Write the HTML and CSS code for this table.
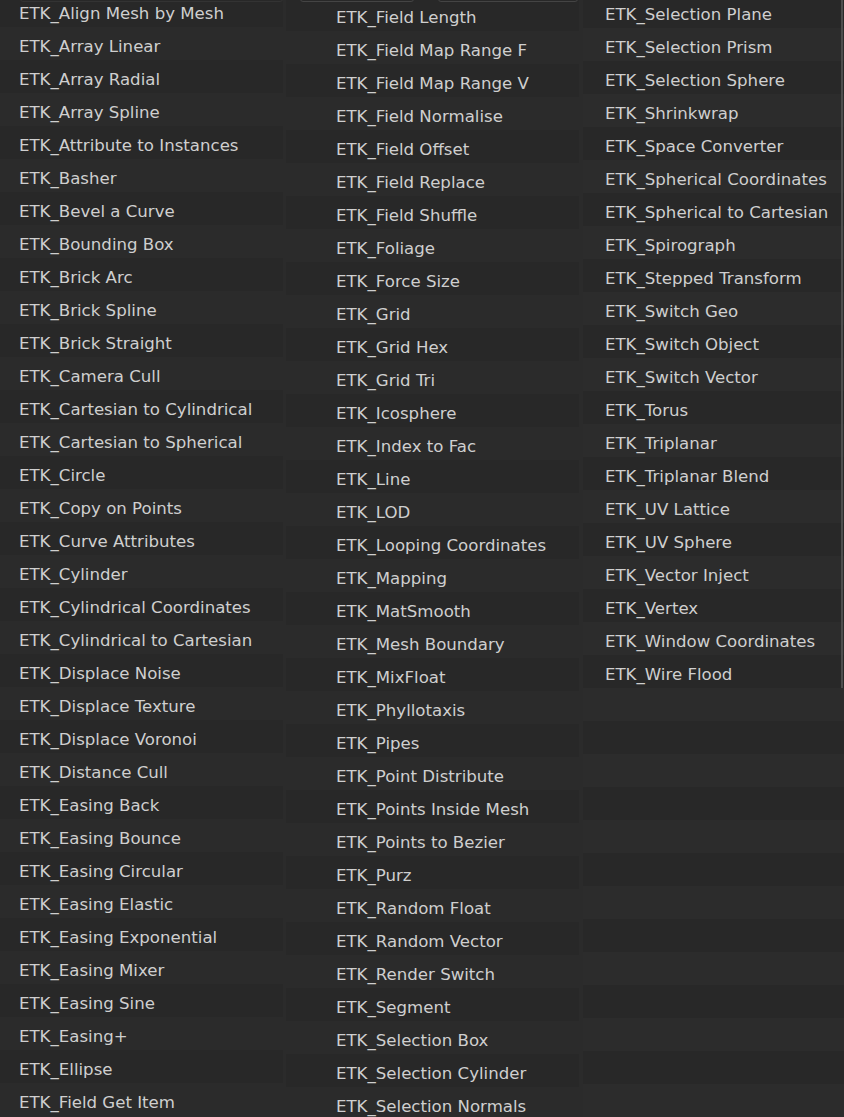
FILE: index.html
```html
<!DOCTYPE html>
<html>
<head>
    <meta charset="UTF-8">
    <title>ETK nodes</title>
    <link rel="stylesheet" href="styles.css">
</head>
<body>
<div id="menu">
    <!--top edge of the search field-->
    <div class="edge edgeA"></div>
    <div class="edge edgeB"></div>
    <div class="edge edgeC"></div>
    <!--first column-->
    <ul class="col colA">
        <li>ETK_Align Mesh by Mesh</li>
        <li>ETK_Array Linear</li>
        <li>ETK_Array Radial</li>
        <li>ETK_Array Spline</li>
        <li>ETK_Attribute to Instances</li>
        <li>ETK_Basher</li>
        <li>ETK_Bevel a Curve</li>
        <li>ETK_Bounding Box</li>
        <li>ETK_Brick Arc</li>
        <li>ETK_Brick Spline</li>
        <li>ETK_Brick Straight</li>
        <li>ETK_Camera Cull</li>
        <li>ETK_Cartesian to Cylindrical</li>
        <li>ETK_Cartesian to Spherical</li>
        <li>ETK_Circle</li>
        <li>ETK_Copy on Points</li>
        <li>ETK_Curve Attributes</li>
        <li>ETK_Cylinder</li>
        <li>ETK_Cylindrical Coordinates</li>
        <li>ETK_Cylindrical to Cartesian</li>
        <li>ETK_Displace Noise</li>
        <li>ETK_Displace Texture</li>
        <li>ETK_Displace Voronoi</li>
        <li>ETK_Distance Cull</li>
        <li>ETK_Easing Back</li>
        <li>ETK_Easing Bounce</li>
        <li>ETK_Easing Circular</li>
        <li>ETK_Easing Elastic</li>
        <li>ETK_Easing Exponential</li>
        <li>ETK_Easing Mixer</li>
        <li>ETK_Easing Sine</li>
        <li>ETK_Easing+</li>
        <li>ETK_Ellipse</li>
        <li>ETK_Field Get Item</li>
    </ul>
    <!--second column-->
    <ul class="col colB">
        <li>ETK_Field Length</li>
        <li>ETK_Field Map Range F</li>
        <li>ETK_Field Map Range V</li>
        <li>ETK_Field Normalise</li>
        <li>ETK_Field Offset</li>
        <li>ETK_Field Replace</li>
        <li>ETK_Field Shuffle</li>
        <li>ETK_Foliage</li>
        <li>ETK_Force Size</li>
        <li>ETK_Grid</li>
        <li>ETK_Grid Hex</li>
        <li>ETK_Grid Tri</li>
        <li>ETK_Icosphere</li>
        <li>ETK_Index to Fac</li>
        <li>ETK_Line</li>
        <li>ETK_LOD</li>
        <li>ETK_Looping Coordinates</li>
        <li>ETK_Mapping</li>
        <li>ETK_MatSmooth</li>
        <li>ETK_Mesh Boundary</li>
        <li>ETK_MixFloat</li>
        <li>ETK_Phyllotaxis</li>
        <li>ETK_Pipes</li>
        <li>ETK_Point Distribute</li>
        <li>ETK_Points Inside Mesh</li>
        <li>ETK_Points to Bezier</li>
        <li>ETK_Purz</li>
        <li>ETK_Random Float</li>
        <li>ETK_Random Vector</li>
        <li>ETK_Render Switch</li>
        <li>ETK_Segment</li>
        <li>ETK_Selection Box</li>
        <li>ETK_Selection Cylinder</li>
        <li>ETK_Selection Normals</li>
    </ul>
    <!--third column-->
    <ul class="col colC">
        <li>ETK_Selection Plane</li>
        <li>ETK_Selection Prism</li>
        <li>ETK_Selection Sphere</li>
        <li>ETK_Shrinkwrap</li>
        <li>ETK_Space Converter</li>
        <li>ETK_Spherical Coordinates</li>
        <li>ETK_Spherical to Cartesian</li>
        <li>ETK_Spirograph</li>
        <li>ETK_Stepped Transform</li>
        <li>ETK_Switch Geo</li>
        <li>ETK_Switch Object</li>
        <li>ETK_Switch Vector</li>
        <li>ETK_Torus</li>
        <li>ETK_Triplanar</li>
        <li>ETK_Triplanar Blend</li>
        <li>ETK_UV Lattice</li>
        <li>ETK_UV Sphere</li>
        <li>ETK_Vector Inject</li>
        <li>ETK_Vertex</li>
        <li>ETK_Window Coordinates</li>
        <li>ETK_Wire Flood</li>
    </ul>
</div>
</body>
</html>
```

FILE: styles.css
```css
* {
    margin: 0;
    padding: 0;
    box-sizing: border-box;
}
html, body {
    width: 844px;
    height: 1117px;
    overflow: hidden;
}
body {
    background-color: #2b2b2b;
    font-family: "DejaVu Sans", "Liberation Sans", sans-serif;
    font-size: 16.6px;
    color: #cfcfcf;
}
ul {
    list-style: none;
}
#menu {
    position: relative;
    display: flex;
    flex-direction: row;
    align-items: flex-start;
    height: 1117px;
}
.edge {
    position: absolute;
    top: -4px;
    height: 6px;
    border: 1px solid #444;
    border-radius: 4px;
    z-index: 5;
}
.edgeA {
    left: 20px;
    width: 263px;
    border-color: #333;
}
.edgeB {
    left: 300px;
    width: 114px;
}
.edgeC {
    left: 438px;
    width: 140px;
}
.col {
    flex: none;
}
.col li {
    height: 33px;
    padding-top: 7px;
    line-height: 26px;
    white-space: nowrap;
}
.col li:nth-child(odd) {
    background-color: #282828;
}
.colA {
    width: 283px;
    margin-top: -6px;
}
.colA li {
    padding-left: 19px;
}
.colB {
    width: 293px;
    margin-left: 3px;
    margin-top: -2px;
}
.colB li {
    padding-left: 50px;
}
.colC {
    flex: 1;
    margin-left: 4px;
    margin-top: -5px;
    height: 1130px;
    background: repeating-linear-gradient(#282828 0px, #282828 33px, #2c2c2c 33px, #2c2c2c 66px);
}
.colC li {
    padding-left: 22px;
    margin-right: 1px;
    border-right: 2px solid #4d4d4d;
}
.colC li:nth-child(odd) {
    background-color: transparent;
}
```
